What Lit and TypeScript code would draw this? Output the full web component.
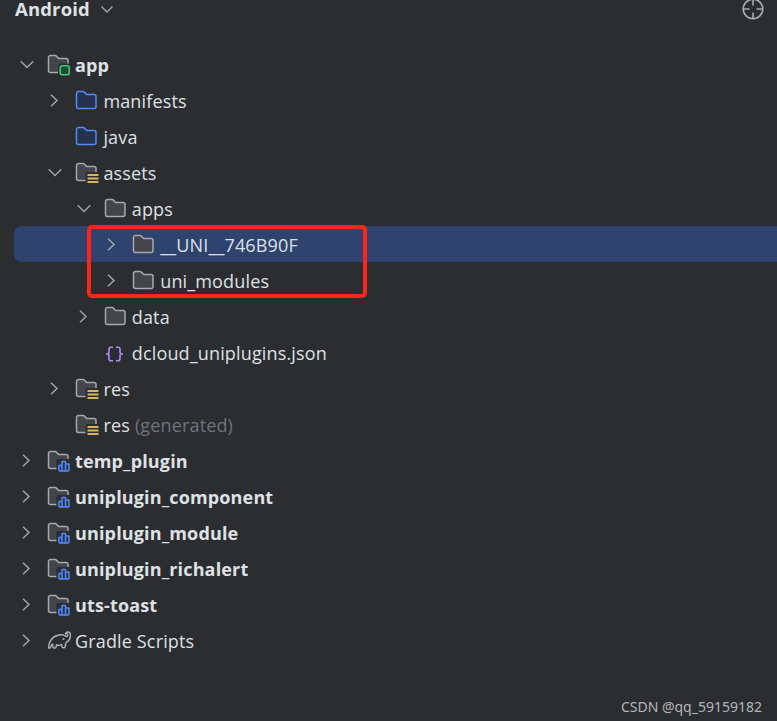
import { LitElement, html, css, svg, nothing } from "lit";
import { customElement } from "lit/decorators.js";

type Icon = "plain" | "blue" | "app" | "res" | "mod" | "json" | "gradle";
interface Row { d: number; c?: "o" | "c"; i: Icon; t: string; b?: boolean; dim?: string; sel?: boolean }

const ROWS: Row[] = [
  { d: 0, c: "o", i: "app", t: "app", b: true },
  { d: 1, c: "c", i: "blue", t: "manifests" },
  { d: 1, i: "blue", t: "java" },
  { d: 1, c: "o", i: "res", t: "assets" },
  { d: 2, c: "o", i: "plain", t: "apps" },
  { d: 3, c: "c", i: "plain", t: "__UNI__746B90F", sel: true },
  { d: 3, c: "c", i: "plain", t: "uni_modules" },
  { d: 2, c: "c", i: "plain", t: "data" },
  { d: 2, i: "json", t: "dcloud_uniplugins.json" },
  { d: 1, c: "c", i: "res", t: "res" },
  { d: 1, i: "res", t: "res", dim: "(generated)" },
  { d: 0, c: "c", i: "mod", t: "temp_plugin", b: true },
  { d: 0, c: "c", i: "mod", t: "uniplugin_component", b: true },
  { d: 0, c: "c", i: "mod", t: "uniplugin_module", b: true },
  { d: 0, c: "c", i: "mod", t: "uniplugin_richalert", b: true },
  { d: 0, c: "c", i: "mod", t: "uts-toast", b: true },
  { d: 0, c: "c", i: "gradle", t: "Gradle Scripts" },
];

const FOLDER = "M1.5 4.5a2 2 0 0 1 2-2h4.6a1.5 1.5 0 0 1 1 .4l2.6 2.6h7.3a2 2 0 0 1 2 2V17.5a2 2 0 0 1-2 2H3.5a2 2 0 0 1-2-2z";

const folder = (stroke: string, fill: string) =>
  svg`<path d=${FOLDER} fill=${fill} stroke=${stroke} stroke-width="1.5"/>`;

function iconBody(i: Icon) {
  switch (i) {
    case "plain":
      return folder("#a7a9ae", "#43454a");
    case "blue":
      return folder("#548af7", "#25324d");
    case "app":
      return svg`${folder("#a7a9ae", "#43454a")}
        <rect x="11" y="10.5" width="13.5" height="13.5" rx="3" fill="#2b2d30"/>
        <rect x="13.2" y="12.7" width="9" height="9" rx="2" fill="#1f4a35" stroke="#3ec97c" stroke-width="1.6"/>`;
    case "res":
      return svg`${folder("#a7a9ae", "#43454a")}
        <rect x="10.5" y="11" width="13.5" height="13" rx="2" fill="#2b2d30"/>
        <path d="M12.5 14h11M12.5 17.5h11M12.5 21h11" stroke="#d9b35c" stroke-width="2"/>`;
    case "mod":
      return svg`${folder("#a7a9ae", "#43454a")}
        <rect x="9.5" y="10" width="14.5" height="14" rx="2" fill="#2b2d30"/>
        <path d="M12 22v-5.5h3V22M15 22V12.5h3.5V22M18.5 22v-7H22v7M12 22h10" fill="#25324d" stroke="#548af7" stroke-width="1.5" stroke-linejoin="round"/>`;
    case "json":
      return svg`<path d="M9 6.2H7a2 2 0 0 0-2 2V11a2 2 0 0 1-2 2H2h1a2 2 0 0 1 2 2v2.800a2 2 0 0 0 2 2h2M12 6.200h2a2 2 0 0 1 2 2V11a2 2 0 0 0 2 2h1-1a2 2 0 0 0-2 2v2.800a2 2 0 0 1-2 2h-2" fill="none" stroke="#b189f5" stroke-width="1.6"/>`;
    case "gradle":
      return svg`<path d="M18.800 4C20.500 2.200 23.500 3 23.500 6c0 3.500-2 6.200-4.500 7.500L18 18c-.3 1-2.500 1-3 0l-.5-2.500c-1.500 1-3.500 1-5 .3L9 18.200c-.4 1-2.600 1-3 0L5.500 15C4 16.500 3.500 18.500 3 19H1.500C2 13 5 7.500 11 6.200c3-.7 6-.2 7.500 1 1.500.8 2.500-.2 2-1.700-.5-1.300-1.500-1.500-2-.7" fill="none" stroke="#b4b6ba" stroke-width="1.400" stroke-linejoin="round" stroke-linecap="round"/>
        <circle cx="16.500" cy="10" r="1" fill="#b4b6ba"/>`;
  }
}

@customElement("app-root")
export class AppRoot extends LitElement {
  static styles = css`
    :host {
      display: block;
      position: relative;
      height: 721px;
      overflow: hidden;
      background: #2b2d30;
      color: #dfe1e5;
      font-family: "Open Sans", "Noto Sans", sans-serif;
      font-size: 18px;
      letter-spacing: 0.15px;
    }
    .header {
      display: flex;
      align-items: center;
      height: 18px;
      padding: 0 13px 0 15px;
      margin-bottom: 28px;
    }
    .title { font-weight: 700; font-size: 18.500px; line-height: 18px; }
    .caret { margin-left: 10px; display: block; }
    .target { margin-left: auto; display: block; overflow: visible; }
    .tree { position: relative; }
    .row {
      display: flex;
      align-items: center;
      box-sizing: border-box;
      height: 36px;
      padding-top: 2px;
      white-space: nowrap;
    }
    .row.sel {
      background: #2e436e;
      border-radius: 7px 0 0 7px;
      margin-left: 14px;
    }
    .chev { width: 16px; height: 16px; flex: none; margin-right: 12px; display: block; }
    .icon { width: 24px; height: 24px; flex: none; margin-right: 4px; display: block; }
    .label.bold { font-weight: 700; }
    .dim { color: #6f737a; margin-left: 5px; }
    .mark {
      position: absolute;
      left: 87px;
      top: 179px;
      width: 280px;
      height: 73px;
      box-sizing: border-box;
      border: 4px solid #fe2419;
      border-radius: 5px;
      pointer-events: none;
    }
    .water {
      position: absolute;
      right: 15px;
      top: 698px;
      font-family: "Noto Sans", sans-serif;
      font-size: 14px;
      letter-spacing: 0;
      line-height: 18px;
      color: #b4b6b9;
    }
  `;

  private chev(c?: "o" | "c") {
    if (!c) return html`<span class="chev"></span>`;
    const d = c === "o" ? "M1.700 4.200L8 10.500l6.300-6.300" : "M4 1.800l6 5.700-6 5.700";
    return html`<svg class="chev" viewBox="0 0 16 16"><path d=${d} fill="none" stroke="#a2a4a9" stroke-width="1.500"/></svg>`;
  }

  private row(r: Row) {
    const left = 19 + r.d * 28.4 - (r.sel ? 14 : 0);
    return html`<div class="row ${r.sel ? "sel" : ""}" style="padding-left:${left}px">
      ${this.chev(r.c)}
      <svg class="icon" viewBox="0 0 24 24">${iconBody(r.i)}</svg>
      <span class="label ${r.b ? "bold" : ""}">${r.t}</span>
      ${r.dim ? html`<span class="dim">${r.dim}</span>` : nothing}
    </div>`;
  }

  render() {
    return html`
      <div class="header">
        <span class="title">Android</span>
        <svg class="caret" width="14" height="14" viewBox="0 0 14 14"><path d="M1.500 4.500L7 10l5.500-5.500" fill="none" stroke="#a2a4a9" stroke-width="1.400"/></svg>
        <svg class="target" width="22" height="22" viewBox="0 0 22 22">
          <circle cx="11" cy="11" r="9.800" fill="none" stroke="#a8abb0" stroke-width="1.600"/>
          <path d="M11 1v6.500M11 14.500V21M1 11h6.500M14.500 11H21" stroke="#a8abb0" stroke-width="1.600"/>
        </svg>
      </div>
      <div class="tree">
        ${ROWS.map((r) => this.row(r))}
        <div class="mark"></div>
      </div>
      <div class="water">CSDN @qq_59159182</div>
    `;
  }
}
